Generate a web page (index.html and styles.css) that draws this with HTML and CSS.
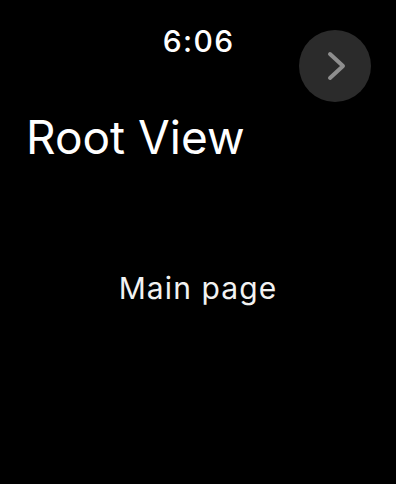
FILE: index.html
```html
<!DOCTYPE html>
<html>
<head>
<meta charset="utf-8">
<link rel="stylesheet" href="styles.css">
</head>
<body>
<div class="screen">
  <header class="top">
    <div class="spacer"></div>
    <div class="time">6:06</div>
    <button class="next" aria-label="Next">
      <svg width="20" height="30" viewBox="0 0 20 30"><path d="M3 3 L16 15 L3 27" fill="none" stroke="#8e8e8e" stroke-width="4" stroke-linecap="round" stroke-linejoin="round"/></svg>
    </button>
  </header>
  <h1 class="title">Root View</h1>
  <p class="body-text">Main page</p>
</div>
</body>
</html>
```
FILE: styles.css
```css
html, body {
  margin: 0;
  padding: 0;
  background: #000;
}
.screen {
  width: 396px;
  height: 484px;
  background: #000;
  color: #fff;
  font-family: Inter, Roboto, "Liberation Sans", sans-serif;
  display: flex;
  flex-direction: column;
  overflow: hidden;
}
.top {
  display: grid;
  grid-template-columns: 1fr auto 1fr;
  align-items: start;
  padding: 26px 25px 0 25px;
}
.time {
  font-size: 30px;
  font-weight: 500;
  line-height: 1;
  letter-spacing: 1.4px;
  margin-right: -1.4px;
}
.next {
  justify-self: end;
  margin-top: 4px;
  width: 72px;
  height: 72px;
  border-radius: 50%;
  background: #2b2b2b;
  border: none;
  padding: 0 0 0 4px;
  display: flex;
  align-items: center;
  justify-content: center;
}
.title {
  margin: 12px 0 0 26px;
  font-size: 46px;
  font-weight: 400;
  line-height: 1;
}
.body-text {
  margin: 113px 0 0 0;
  text-align: center;
  font-size: 30px;
  line-height: 1;
  letter-spacing: 1.1px;
  color: #f2f2f2;
}
```
